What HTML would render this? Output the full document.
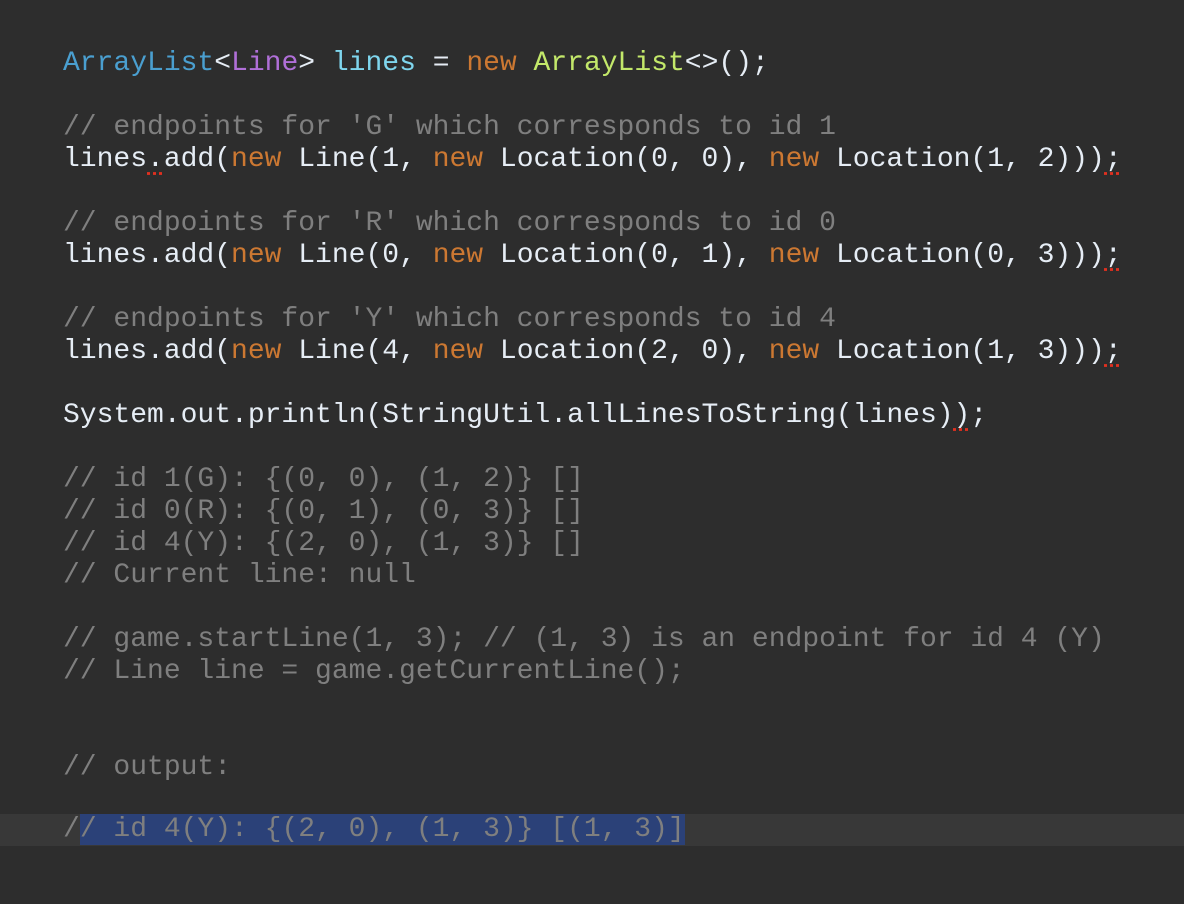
<!DOCTYPE html><html><head><style>
body{margin:0;width:1184px;height:904px;background:#2d2d2d;overflow:hidden;font-family:"Liberation Mono",monospace;font-size:28px;color:#e6edf5}
.l{position:absolute;left:63px;height:32px;line-height:32px;white-space:pre;margin-top:2px}
.c{color:#7f7f7f}.k{color:#cc7832}.t{color:#4a9fd0}.p{color:#b06fd8}.v{color:#7fd6ee}.g{color:#c3e86a}
.cur{position:absolute;left:0;top:814px;width:1184px;height:32px;background:#383838}
.sel{background:#2b4178}
.u{text-decoration:underline dotted #e03020;text-underline-offset:6px}
</style></head><body>
<div class="cur"></div>
<div class="l" style="top:46px"><span class="t">ArrayList</span>&lt;<span class="p">Line</span>&gt; <span class="v">lines</span> = <span class="k">new</span> <span class="g">ArrayList</span>&lt;&gt;();</div>
<div class="l c" style="top:110px">// endpoints for 'G' which corresponds to id 1</div>
<div class="l" style="top:142px">lines<span class="u">.</span>add(<span class="k">new</span> Line(1, <span class="k">new</span> Location(0, 0), <span class="k">new</span> Location(1, 2)))<span class="u">;</span></div>
<div class="l c" style="top:206px">// endpoints for 'R' which corresponds to id 0</div>
<div class="l" style="top:238px">lines.add(<span class="k">new</span> Line(0, <span class="k">new</span> Location(0, 1), <span class="k">new</span> Location(0, 3)))<span class="u">;</span></div>
<div class="l c" style="top:302px">// endpoints for 'Y' which corresponds to id 4</div>
<div class="l" style="top:334px">lines.add(<span class="k">new</span> Line(4, <span class="k">new</span> Location(2, 0), <span class="k">new</span> Location(1, 3)))<span class="u">;</span></div>
<div class="l" style="top:398px">System.out.println(StringUtil.allLinesToString(lines)<span class="u">)</span>;</div>
<div class="l c" style="top:462px">// id 1(G): {(0, 0), (1, 2)} []</div>
<div class="l c" style="top:494px">// id 0(R): {(0, 1), (0, 3)} []</div>
<div class="l c" style="top:526px">// id 4(Y): {(2, 0), (1, 3)} []</div>
<div class="l c" style="top:558px">// Current line: null</div>
<div class="l c" style="top:622px">// game.startLine(1, 3); // (1, 3) is an endpoint for id 4 (Y)</div>
<div class="l c" style="top:654px">// Line line = game.getCurrentLine();</div>
<div class="l c" style="top:750px">// output:</div>
<div class="l c" style="top:812px">/<span class="sel">/ id 4(Y): {(2, 0), (1, 3)} [(1, 3)]</span></div>
</body></html>
